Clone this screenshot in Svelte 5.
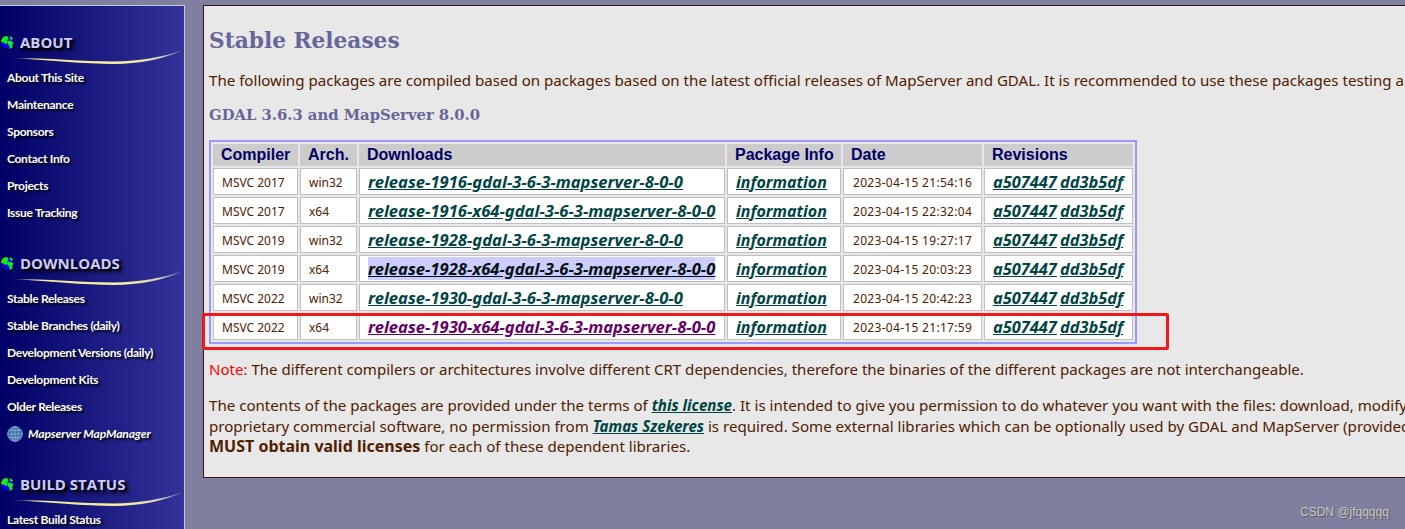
<script>
  const sections = [
    { title: 'ABOUT', items: ['About This Site', 'Maintenance', 'Sponsors', 'Contact Info', 'Projects', 'Issue Tracking'] },
    { title: 'DOWNLOADS', items: ['Stable Releases', 'Stable Branches (daily)', 'Development Versions (daily)', 'Development Kits', 'Older Releases', 'Mapserver MapManager'] },
    { title: 'BUILD STATUS', items: ['Latest Build Status'] }
  ];
  const rows = [
    ['MSVC 2017', 'win32', 'release-1916-gdal-3-6-3-mapserver-8-0-0', '2023-04-15 21:54:16', ''],
    ['MSVC 2017', 'x64', 'release-1916-x64-gdal-3-6-3-mapserver-8-0-0', '2023-04-15 22:32:04', ''],
    ['MSVC 2019', 'win32', 'release-1928-gdal-3-6-3-mapserver-8-0-0', '2023-04-15 19:27:17', ''],
    ['MSVC 2019', 'x64', 'release-1928-x64-gdal-3-6-3-mapserver-8-0-0', '2023-04-15 20:03:23', 'hl'],
    ['MSVC 2022', 'win32', 'release-1930-gdal-3-6-3-mapserver-8-0-0', '2023-04-15 20:42:23', ''],
    ['MSVC 2022', 'x64', 'release-1930-x64-gdal-3-6-3-mapserver-8-0-0', '2023-04-15 21:17:59', 'vis']
  ];
</script>

<div class="page">
  <nav class="side">
    {#each sections as s}
      <section class="sec">
        <div class="head">
          <svg class="globe" viewBox="0 0 16 16" width="15" height="15">
            <circle cx="8" cy="8" r="7.5" fill="#0000f0" stroke="#000" stroke-width="1" />
            <path d="M1 6 L3 2.5 L7 0.8 L8.5 2.5 L9 5 L7.5 5.8 L8 8 L6 9.8 L4 8 L2 8 Z M8 6.4 L11.5 6 L14.5 8 L13 10.5 L13.5 13 L10.5 15 L10 11.5 L8 9.4 Z M10.5 1 L14 3.5 L12.5 5.2 L10.5 3.8 Z" fill="#10f010" />
          </svg>
          <span>{s.title}</span>
          <svg class="swoosh" viewBox="0 0 174 16" width="174" height="16">
            <defs>
              <linearGradient id="sw" x1="0" x2="1" y1="0" y2="0">
                <stop offset="0" stop-color="#f0e890" stop-opacity="0" />
                <stop offset="0.14" stop-color="#f0e890" />
                <stop offset="0.65" stop-color="#f8f2a0" />
                <stop offset="0.85" stop-color="#d8d4b0" />
                <stop offset="1" stop-color="#ffffff" stop-opacity="0.35" />
              </linearGradient>
            </defs>
            <path d="M0 9 C40 9 75 12.5 105 12.5 C130 12 155 8 174 1 C155 10 130 15 105 15 C75 15 40 11 0 9 Z" fill="url(#sw)" />
          </svg>
        </div>
        <ul>
          {#each s.items as it}
            <li class:mm={it === 'Mapserver MapManager'}>
              {#if it === 'Mapserver MapManager'}
                <svg viewBox="0 0 16 16" width="16" height="16" class="mmicon">
                  <circle cx="8" cy="8" r="7.4" fill="#3b6ea8" stroke="#6f9ac8" stroke-width="1" />
                  <g fill="none" stroke="#8fb2d8" stroke-width="0.8">
                    <ellipse cx="8" cy="8" rx="3.4" ry="7.2" />
                    <path d="M8 1V15M1 8H15M2 4.5H14M2 11.5H14" />
                  </g>
                </svg>
              {/if}
              {it}
            </li>
          {/each}
        </ul>
      </section>
    {/each}
  </nav>

  <main class="main">
    <h1>Stable Releases</h1>
    <p class="intro">The following packages are compiled based on packages based on the latest official releases of MapServer and GDAL. It is recommended to use these packages testing and using them in production environments.</p>
    <h2>GDAL 3.6.3 and MapServer 8.0.0</h2>
    <table>
      <thead>
        <tr>
          <th class="c1">Compiler</th><th class="c2">Arch.</th><th class="c3">Downloads</th><th class="c4">Package Info</th><th class="c5">Date</th><th class="c6">Revisions</th>
        </tr>
      </thead>
      <tbody>
        {#each rows as r}
          <tr>
            <td class="sm">{r[0]}</td>
            <td class="sm">{r[1]}</td>
            <td><a href="#a" class="rel {r[4]}">{r[2]}</a></td>
            <td><a href="#a" class="info">information</a></td>
            <td class="sm dt">{r[3]}</td>
            <td><a href="#a">a507447</a> <a href="#a">dd3b5df</a></td>
          </tr>
        {/each}
      </tbody>
    </table>
    <p class="note"><span class="red">Note:</span> The different compilers or architectures involve different CRT dependencies, therefore the binaries of the different packages are not interchangeable.</p>
    <p class="terms">The contents of the packages are provided under the terms of <a href="#a">this license</a>. It is intended to give you permission to do whatever you want with the files: download, modify, redistribute, even in<br />proprietary commercial software, no permission from <a href="#a">Tamas Szekeres</a> is required. Some external libraries which can be optionally used by GDAL and MapServer (provided as plugins)<br /><b>MUST obtain valid licenses</b> for each of these dependent libraries.</p>
  </main>

  <div class="redbox"></div>
  <div class="mark">CSDN @jfqqqqq</div>
</div>

<style>
  :global(body) {
    margin: 0;
    background: #7f7f9f;
    overflow: hidden;
  }
  .page {
    position: relative;
    display: flex;
    align-items: flex-start;
    width: 1405px;
    height: 529px;
    overflow: hidden;
    padding-top: 5px;
    box-sizing: border-box;
  }
  .side {
    flex: none;
    box-sizing: border-box;
    width: 185px;
    height: 524px;
    padding-top: 25px;
    background: linear-gradient(90deg, #000066, #333399);
    border-top: 1px solid #c8c8d8;
    border-right: 1px solid #c8c8d8;
    overflow: hidden;
    font-family: "Lato", sans-serif;
  }
  .sec {
    margin-bottom: 26px;
  }
  .head {
    position: relative;
    display: flex;
    align-items: center;
    gap: 5px;
    height: 33px;
    box-sizing: border-box;
    padding-bottom: 11px;
    font: 700 15px "Open Sans", sans-serif;
    color: #ccccff;
    text-shadow: 2px 2px 2px #000, 3px 3px 4px #000;
  }
  .globe {
    flex: none;
  }
  .swoosh {
    position: absolute;
    left: 9px;
    top: 18px;
  }
  ul {
    list-style: none;
    margin: 0;
    padding: 0;
  }
  li {
    display: flex;
    align-items: center;
    height: 27px;
    padding-left: 7px;
    font-size: 12px;
    font-weight: 700;
    letter-spacing: -0.3px;
    color: #fff;
    text-shadow: 2px 2px 2px #000;
  }
  .mm {
    font-style: italic;
    gap: 5px;
    letter-spacing: -0.1px;
  }
  .mmicon {
    flex: none;
  }
  .main {
    flex: none;
    box-sizing: border-box;
    width: 1300px;
    height: 473px;
    margin-left: 18px;
    padding: 0 5px;
    background: #e8e8e8;
    border: 1px solid #301818;
    font: 15.1px "Noto Sans", sans-serif;
    color: #502000;
  }
  h1 {
    margin: 19px 0 0;
    font: 700 21.7px/32px "DejaVu Serif", serif;
    color: #666699;
  }
  h2 {
    margin: 0 0 15px;
    font: 700 14.8px/20px "DejaVu Serif", serif;
    color: #666699;
  }
  p {
    margin: 0;
    line-height: 20px;
    white-space: nowrap;
  }
  .intro {
    margin: 13px 0 15px;
  }
  table {
    border: 2px solid #9999ff;
    border-spacing: 2px;
    width: 927px;
    table-layout: fixed;
  }
  th {
    height: 22px;
    padding: 0 0 0 8px;
    background: #cccccc;
    font: 700 16px "Liberation Sans", sans-serif;
    color: #000066;
    text-align: left;
  }
  .c1 { width: 77px; }
  .c2 { width: 49px; }
  .c3 { width: 358px; }
  .c4 { width: 106px; }
  .c5 { width: 131px; }
  .c6 { width: 141px; }
  td {
    height: 25px;
    padding: 0 0 0 8px;
    background: #fff;
    border: 1px solid #c0c0c0;
    white-space: nowrap;
    font-size: 12px;
  }
  td.sm {
    height: 24px;
    padding-top: 1px;
  }
  td.dt {
    padding-left: 9px;
    letter-spacing: 0.3px;
  }
  td a {
    font-size: 16.4px;
  }
  td a.rel {
    font-size: 16.6px;
  }
  td a.info {
    font-size: 16px;
  }
  a {
    font-weight: 700;
    font-style: italic;
    color: #004444;
  }
  a.hl {
    background: #ccccff;
    color: #001010;
  }
  a.vis {
    color: #660066;
  }
  .note {
    margin-top: 15px;
    font-size: 15.05px;
  }
  .red {
    color: #ff0000;
  }
  .terms {
    margin-top: 16px;
    line-height: 20.5px;
  }
  .terms b {
    font-size: 16px;
  }
  .redbox {
    position: absolute;
    left: 202px;
    top: 313px;
    width: 961px;
    height: 31px;
    border: 3px solid #f01818;
    border-radius: 2px;
  }
  .mark {
    position: absolute;
    left: 1300px;
    top: 505px;
    font: 12px "Liberation Sans", sans-serif;
    color: #c8c8c8;
    text-shadow: 1px 1px 1px #555;
  }
</style>
